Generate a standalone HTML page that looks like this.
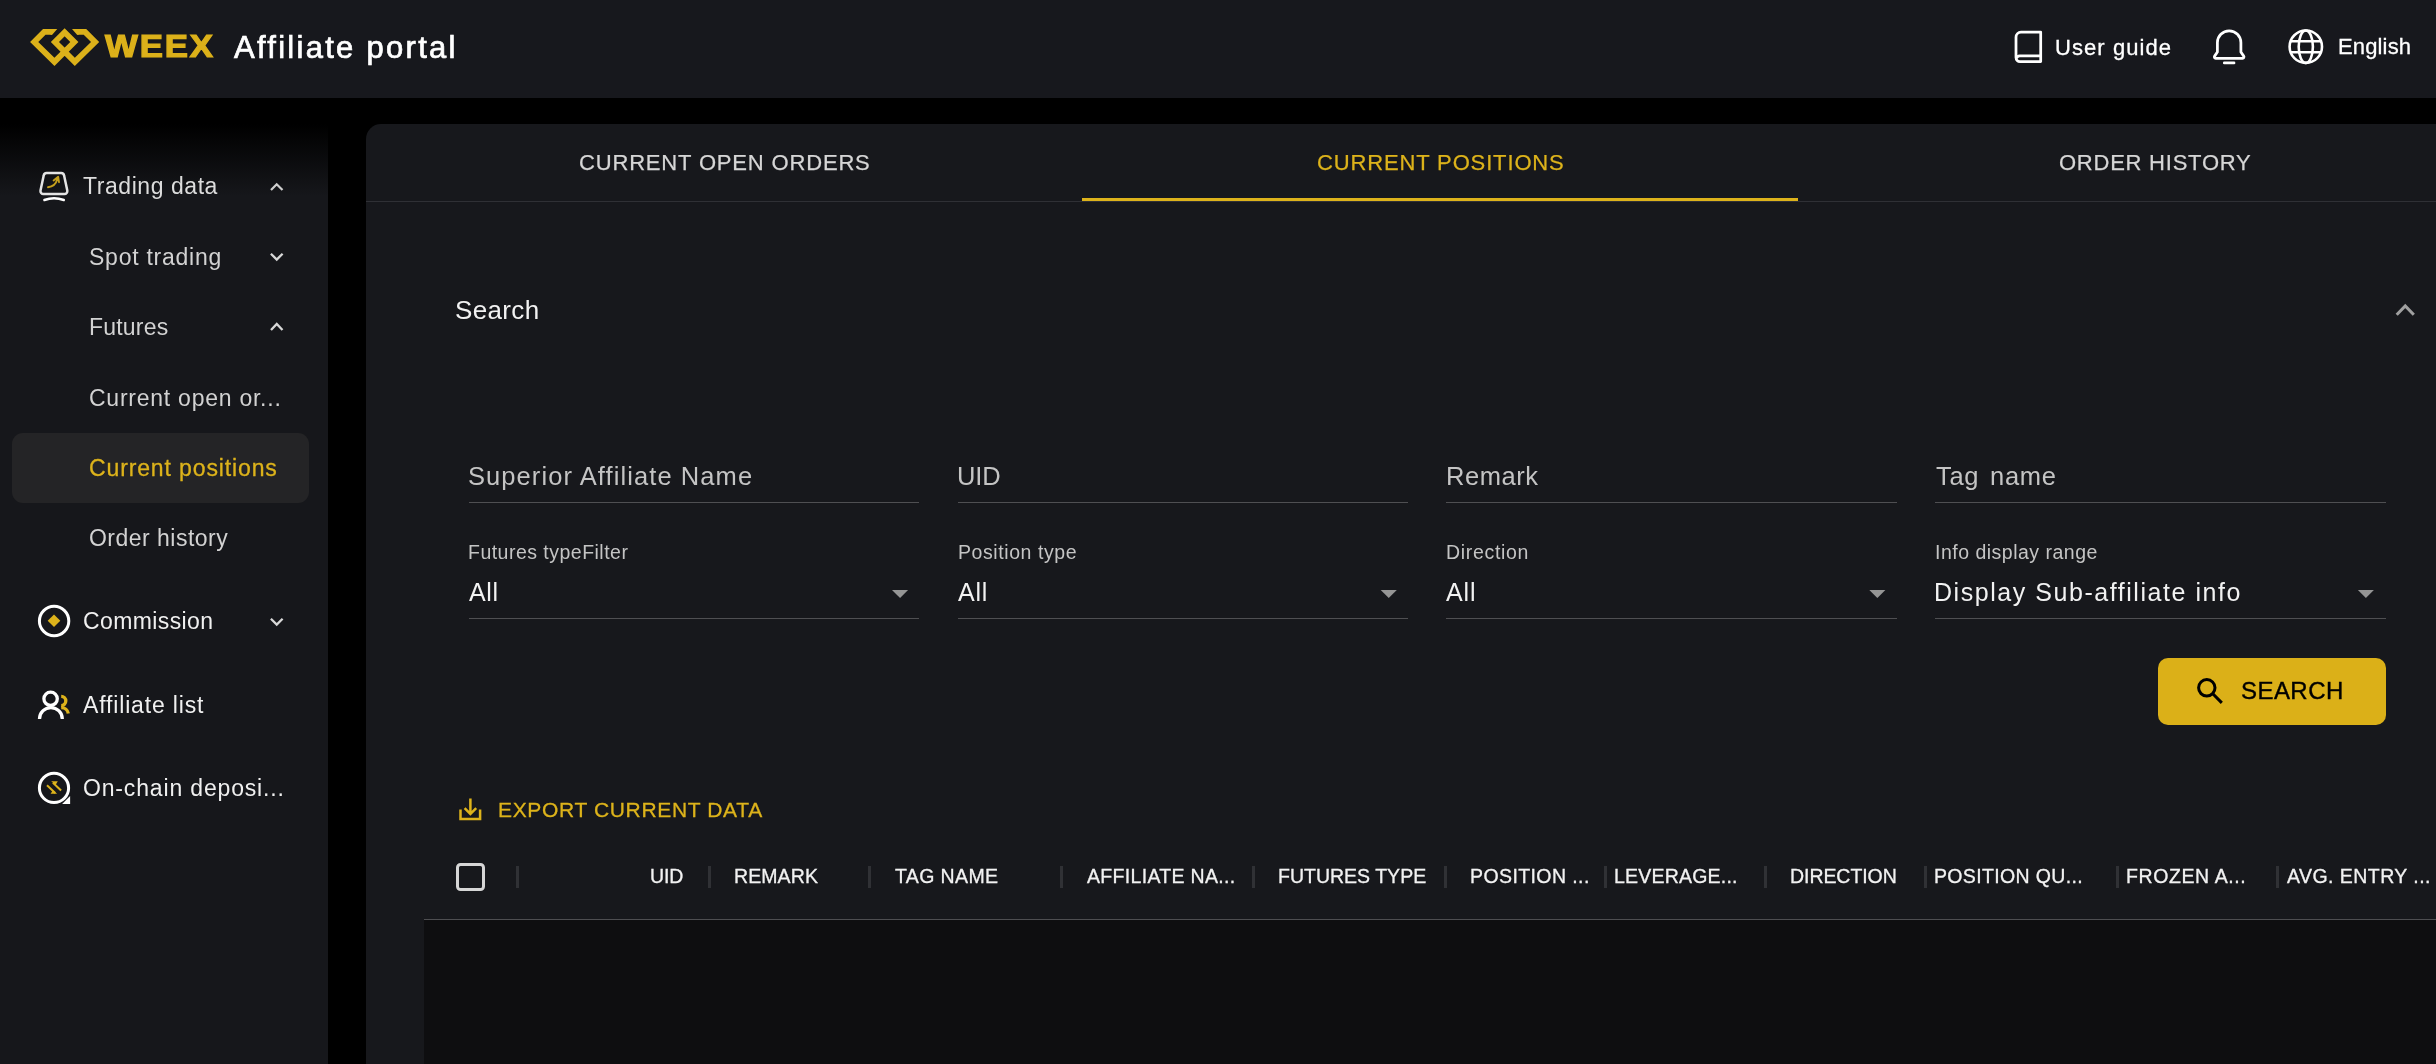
<!DOCTYPE html>
<html lang="en">
<head>
<meta charset="utf-8">
<title>WEEX Affiliate portal - Current positions</title>
<style>
*{box-sizing:border-box;margin:0;padding:0}
html,body{width:2436px;height:1064px;overflow:hidden;background:#000}
body{position:relative;font-family:"Liberation Sans",sans-serif;color:#fff}
ul{list-style:none}
a{color:inherit;text-decoration:none}
table,thead,tbody,tr,th,td{display:block;border:0}
.t{position:absolute;white-space:nowrap;line-height:1;display:block;font-weight:400;will-change:transform}
svg{position:absolute;overflow:visible}
.bg-header{position:absolute;left:0;top:0;width:2436px;height:98px;background:#17181d}
.bg-nav{position:absolute;left:0;top:124px;width:328px;height:940px;background:linear-gradient(#000 0,#16171b 72px)}
.active{position:absolute;left:12px;top:433px;width:297px;height:70px;border-radius:11px;background:#242426}
.bg-main{position:absolute;left:366px;top:124px;width:2148px;height:960px;background:#17181c;border-radius:15px 0 0 0}
.tabline{position:absolute;left:366px;top:201px;width:2148px;height:1px;background:#2f3035}
.tabsel{position:absolute;left:1082px;top:198px;width:716px;height:3px;background:#ddb31b}
.ul{position:absolute;height:1px;width:450px;background:#4f4f52}
.btn{position:absolute;left:2158px;top:658px;width:228px;height:67px;border:0;border-radius:10px;background:#dbb018;font:inherit;cursor:pointer}
.cb{position:absolute;left:456px;top:862.6px;width:28.6px;height:28.8px;border:3px solid #d6d6d6;border-radius:4.5px}
.sep{position:absolute;top:866.3px;width:3px;height:22px;background:#303135}
.tbody{position:absolute;left:424px;top:920px;width:2090px;height:200px;background:#0e0e10}
.thline{position:absolute;left:424px;top:919px;width:2090px;height:1px;background:#4e4e51}
</style>
</head>
<body>
<header>
 <div class="bg-header"></div>
 <a class="logo">
  <svg width="80" height="46" viewBox="26 24 80 46" style="left:26px;top:24px" role="img" aria-label="WEEX logo">
   <path d="M52 31.9H44.23L34.2 41.95L54.46 61.84L74.33 42L64.63 32.3L54.93 42L74.8 61.84L95.1 41.95L85.03 31.9H77.2" fill="none" stroke="#dcb11a" stroke-width="5.8" stroke-linejoin="miter" stroke-miterlimit="10"/>
   <path d="M50.5 29H57.25L52.2 34.8H50.5ZM78.7 29H72L77.05 34.8H78.7Z" fill="#dcb11a"/>
  </svg>
  <span class="t" style="left:104.60px;top:31px;font-size:30.5px;color:#dcb11a;letter-spacing:1.6px;transform:scaleX(1.1399);transform-origin:0 0;font-weight:700;-webkit-text-stroke:1.2px #dcb11a;">WEEX</span>
 </a>
 <h1 class="t" style="left:233.50px;top:32px;font-size:31px;color:#ffffff;letter-spacing:2.282px;-webkit-text-stroke:0.7px #fff;">Affiliate portal</h1>
 <div class="hdr-actions">
  <a class="guide">
   <svg width="32" height="36" viewBox="2012 28 32 36" style="left:2012px;top:28px" fill="none" stroke="#fff" stroke-width="2.75" stroke-linejoin="round">
    <path d="M2021 32.2H2040.7V61.6H2020A4 4 0 0 1 2016 57.6V37.2A5 5 0 0 1 2021 32.2Z"/>
    <path d="M2016.4 58.5A3.4 3.4 0 0 1 2019.8 55.8H2040.7"/>
   </svg>
   <span class="t" style="left:2054.80px;top:37px;font-size:22px;color:#ffffff;letter-spacing:1.072px;-webkit-text-stroke:0.3px #fff;">User guide</span>
  </a>
  <a class="bell" aria-label="Notifications">
   <svg width="36" height="38" viewBox="2211 28 36 38" style="left:2211px;top:28px" fill="none" stroke="#fff" stroke-width="2.75" stroke-linejoin="round" stroke-linecap="round">
    <path d="M2217.4 42.6A11.75 11.75 0 0 1 2240.9 42.6V52L2243.7 56.1A1.4 1.4 0 0 1 2242.6 58.3H2215.7A1.4 1.4 0 0 1 2214.6 56.1L2217.4 52Z"/>
    <path d="M2224.3 62.9H2234"/>
   </svg>
  </a>
  <a class="lang">
   <svg width="38" height="38" viewBox="2287 28 38 38" style="left:2287px;top:28px" fill="none" stroke="#fff" stroke-width="2.6">
    <circle cx="2305.8" cy="46.7" r="16.2"/>
    <ellipse cx="2305.8" cy="46.7" rx="7.1" ry="16.2"/>
    <path d="M2290.6 41.3H2321M2290.6 52.2H2321"/>
   </svg>
   <span class="t" style="left:2338.20px;top:36px;font-size:22px;color:#ffffff;letter-spacing:0.147px;-webkit-text-stroke:0.3px #fff;">English</span>
  </a>
 </div>
</header>

<nav aria-label="Sidebar">
 <div class="bg-nav"></div>
 <div class="active"></div>
 <ul>
  <li>
   <svg width="40" height="36" viewBox="36 168 40 36" style="left:36px;top:168px" fill="none" stroke-linecap="round" stroke-linejoin="round">
    <path d="M46.6 173H61.2A3 3 0 0 1 64.1 175.6L67.3 190.6A3 3 0 0 1 64.4 194.1H43.4A3 3 0 0 1 40.5 190.6L43.7 175.6A3 3 0 0 1 46.6 173Z" stroke="#e4e4e4" stroke-width="2.5"/>
    <path d="M44.4 200Q54 196.6 63.8 200" stroke="#fff" stroke-width="2.4"/>
    <path d="M48 187.2Q55.3 186.6 57.4 179M53.6 180.4L58.2 176.8L59 182.2" stroke="#c49f1c" stroke-width="1.9"/>
   </svg>
   <a class="t" style="left:83.20px;top:175px;font-size:23px;color:#dcdcdc;letter-spacing:0.555px;">Trading data</a>
   <svg width="16" height="12" viewBox="269 181 16 12" style="left:269px;top:181px" fill="none" stroke="#cfcfcf" stroke-width="2.2"><path d="M271 190L276.7 184.3L282.5 190"/></svg>
   <ul>
    <li>
     <a class="t" style="left:88.80px;top:246px;font-size:23px;color:#d2d2d2;letter-spacing:0.751px;">Spot trading</a>
     <svg width="16" height="12" viewBox="269 251 16 12" style="left:269px;top:251px" fill="none" stroke="#d8d8d8" stroke-width="2.3"><path d="M270.9 253.7L276.75 259.6L282.6 253.7"/></svg>
    </li>
    <li>
     <a class="t" style="left:89.30px;top:316px;font-size:23px;color:#d2d2d2;letter-spacing:0.204px;">Futures</a>
     <svg width="16" height="12" viewBox="269 321 16 12" style="left:269px;top:321px" fill="none" stroke="#d8d8d8" stroke-width="2.3"><path d="M271 330L276.75 324L282.5 330"/></svg>
     <ul>
      <li><a class="t" style="left:88.80px;top:387px;font-size:23px;color:#d2d2d2;letter-spacing:0.753px;">Current open or...</a></li>
      <li><a class="t" aria-current="page" style="left:88.80px;top:457px;font-size:23px;color:#ddb31b;letter-spacing:0.871px;-webkit-text-stroke:0.3px #ddb31b;">Current positions</a></li>
      <li><a class="t" style="left:88.80px;top:527px;font-size:23px;color:#d2d2d2;letter-spacing:0.481px;">Order history</a></li>
     </ul>
    </li>
   </ul>
  </li>
  <li>
   <svg width="36" height="36" viewBox="36 603 36 36" style="left:36px;top:603px"><circle cx="54.1" cy="621" r="14.7" fill="none" stroke="#fff" stroke-width="3"/><path d="M54 614.6L60.3 620.8L54 627L47.7 620.8Z" fill="#ddb31b"/></svg>
   <a class="t" style="left:82.70px;top:610px;font-size:23px;color:#f0f0f0;letter-spacing:0.397px;">Commission</a>
   <svg width="16" height="12" viewBox="269 616 16 12" style="left:269px;top:616px" fill="none" stroke="#d8d8d8" stroke-width="2.3"><path d="M270.9 618.7L276.75 624.6L282.6 618.7"/></svg>
  </li>
  <li>
   <svg width="38" height="34" viewBox="36 688 38 34" style="left:36px;top:688px" fill="none" stroke-width="3.3">
    <circle cx="50.6" cy="698.8" r="6.7" stroke="#fff"/>
    <path d="M39.5 719A11.4 11.4 0 0 1 62.3 719" stroke="#fff"/>
    <path d="M61.2 696.4A4 4 0 0 1 61.2 705.6" stroke="#ddb31b"/>
    <path d="M61.2 707.6A7 7 0 0 1 68.3 713.6" stroke="#ddb31b"/>
   </svg>
   <a class="t" style="left:83.20px;top:694px;font-size:23px;color:#f0f0f0;letter-spacing:0.845px;">Affiliate list</a>
  </li>
  <li>
   <svg width="38" height="38" viewBox="36 770 38 38" style="left:36px;top:770px">
    <path d="M62.1 804H70.1V796.1Z" fill="#fff"/>
    <circle cx="54" cy="787.9" r="14.6" fill="#16171b" stroke="#fff" stroke-width="3"/>
    <path d="M47 785.3L55.2 793" stroke="#ddb31b" stroke-width="2" fill="none"/><path d="M50.6 793.8H57.2L52.9 790.2Z" fill="#ddb31b"/>
    <path d="M61.1 790.5L52.9 782.8" stroke="#ddb31b" stroke-width="2" fill="none"/><path d="M51.2 781.3H57.8L55.5 784.9Z" fill="#ddb31b"/>
   </svg>
   <a class="t" style="left:82.70px;top:777px;font-size:23px;color:#f0f0f0;letter-spacing:0.837px;">On-chain deposi...</a>
  </li>
 </ul>
</nav>

<main>
 <div class="bg-main"></div>
 <div class="tabs" role="tablist">
  <div class="tabline"></div>
  <div class="tabsel"></div>
  <a class="t" role="tab" style="left:578.50px;top:152px;font-size:22px;color:#d6d6d6;letter-spacing:0.829px;-webkit-text-stroke:0.25px #d6d6d6;">CURRENT OPEN ORDERS</a>
  <a class="t" role="tab" aria-selected="true" style="left:1316.50px;top:152px;font-size:22px;color:#ddb31b;letter-spacing:0.857px;-webkit-text-stroke:0.25px #ddb31b;">CURRENT POSITIONS</a>
  <a class="t" role="tab" style="left:2059.00px;top:152px;font-size:22px;color:#d6d6d6;letter-spacing:0.760px;-webkit-text-stroke:0.25px #d6d6d6;">ORDER HISTORY</a>
 </div>

 <section class="search-panel">
  <h2 class="t" style="left:455.40px;top:297px;font-size:26px;color:#f2f2f2;letter-spacing:0.356px;">Search</h2>
  <svg width="24" height="16" viewBox="2394 302 24 16" style="left:2394px;top:302px" fill="none" stroke="#a0a0a0" stroke-width="3"><path d="M2396.7 314.8L2405.25 306L2413.8 314.8"/></svg>
  <form>
   <div class="field"><label class="t" style="left:468.20px;top:464px;font-size:25.5px;color:#c4c4c4;letter-spacing:1.079px;">Superior Affiliate Name</label><div class="ul" style="left:469px;top:502px"></div></div>
   <div class="field"><label class="t" style="left:957.40px;top:464px;font-size:25.5px;color:#c4c4c4;letter-spacing:-0.150px;">UID</label><div class="ul" style="left:958px;top:502px"></div></div>
   <div class="field"><label class="t" style="left:1445.60px;top:464px;font-size:25.5px;color:#c4c4c4;letter-spacing:0.558px;">Remark</label><div class="ul" style="left:1446px;top:502px;width:451px"></div></div>
   <div class="field"><label class="t" style="left:1935.80px;top:464px;font-size:25.5px;color:#c4c4c4;letter-spacing:0.714px;word-spacing:3px;">Tag name</label><div class="ul" style="left:1935px;top:502px;width:451px"></div></div>
   <div class="field select"><label class="t" style="left:468.40px;top:543px;font-size:19.5px;color:#c4c4c4;letter-spacing:0.481px;">Futures typeFilter</label><span class="t" style="left:469.10px;top:580px;font-size:25px;color:#f2f2f2;letter-spacing:0.685px;">All</span>
    <svg width="20" height="12" viewBox="890 588 20 12" style="left:890px;top:588px"><path d="M892 589.9H908.1L900.05 598Z" fill="#959595"/></svg>
    <div class="ul" style="left:469px;top:618px"></div></div>
   <div class="field select"><label class="t" style="left:957.70px;top:543px;font-size:19.5px;color:#c4c4c4;letter-spacing:0.575px;">Position type</label><span class="t" style="left:957.90px;top:580px;font-size:25px;color:#f2f2f2;letter-spacing:0.785px;">All</span>
    <svg width="20" height="12" viewBox="1379 588 20 12" style="left:1379px;top:588px"><path d="M1380.7 589.9H1396.8L1388.75 598Z" fill="#959595"/></svg>
    <div class="ul" style="left:958px;top:618px"></div></div>
   <div class="field select"><label class="t" style="left:1445.70px;top:543px;font-size:19.5px;color:#c4c4c4;letter-spacing:0.675px;">Direction</label><span class="t" style="left:1446.40px;top:580px;font-size:25px;color:#f2f2f2;letter-spacing:0.935px;">All</span>
    <svg width="20" height="12" viewBox="1868 588 20 12" style="left:1868px;top:588px"><path d="M1869.3 589.9H1885.4L1877.35 598Z" fill="#959595"/></svg>
    <div class="ul" style="left:1446px;top:618px;width:451px"></div></div>
   <div class="field select"><label class="t" style="left:1934.90px;top:543px;font-size:19.5px;color:#c4c4c4;letter-spacing:0.495px;">Info display range</label><span class="t" style="left:1934.20px;top:580px;font-size:25px;color:#f2f2f2;letter-spacing:1.547px;">Display Sub-affiliate info</span>
    <svg width="20" height="12" viewBox="2357 588 20 12" style="left:2357px;top:588px"><path d="M2357.9 589.9H2373.9L2365.90 598Z" fill="#959595"/></svg>
    <div class="ul" style="left:1935px;top:618px;width:451px"></div></div>
   <button type="button" class="btn">
    <svg width="30" height="30" viewBox="2195 676 30 30" style="left:37px;top:18px" fill="none" stroke="#000" stroke-width="3"><circle cx="2206.8" cy="687.8" r="8.2"/><path d="M2212.8 693.8L2221.8 702.9"/></svg>
    <span class="t" style="left:83.40px;top:21px;font-size:24px;color:#000000;letter-spacing:0.443px;-webkit-text-stroke:0.4px #000;">SEARCH</span>
   </button>
  </form>
 </section>

 <section class="results">
  <a class="export">
   <svg width="26" height="26" viewBox="457 796 26 26" style="left:457px;top:796px" fill="none" stroke="#ddb31b" stroke-width="2.5"><path d="M460.5 809.6V819H480.1V809.6"/><path d="M470.4 798.5V813.6M464.6 808.1L470.4 813.9L476.2 808.1"/></svg>
   <span class="t" style="left:497.70px;top:799px;font-size:21px;color:#ddb31b;letter-spacing:0.651px;-webkit-text-stroke:0.3px #ddb31b;">EXPORT CURRENT DATA</span>
  </a>
  <table>
   <thead>
    <tr>
     <th><div class="cb" role="checkbox" aria-checked="false"></div></th>
     <i class="sep" style="left:515.8px"></i><i class="sep" style="left:707.8px"></i><i class="sep" style="left:867.8px"></i><i class="sep" style="left:1059.8px"></i><i class="sep" style="left:1251.8px"></i><i class="sep" style="left:1443.8px"></i><i class="sep" style="left:1603.8px"></i><i class="sep" style="left:1763.8px"></i><i class="sep" style="left:1923.8px"></i><i class="sep" style="left:2115.8px"></i><i class="sep" style="left:2275.8px"></i>
     <th><span class="t" style="left:649.50px;top:867px;font-size:19.5px;color:#f2f2f2;letter-spacing:-0.150px;-webkit-text-stroke:0.3px #f2f2f2;">UID</span></th><th><span class="t" style="left:734.00px;top:867px;font-size:19.5px;color:#f2f2f2;letter-spacing:0.096px;-webkit-text-stroke:0.3px #f2f2f2;">REMARK</span></th><th><span class="t" style="left:895.00px;top:867px;font-size:19.5px;color:#f2f2f2;letter-spacing:0.373px;-webkit-text-stroke:0.3px #f2f2f2;">TAG NAME</span></th><th><span class="t" style="left:1086.80px;top:867px;font-size:19.5px;color:#f2f2f2;letter-spacing:0.319px;-webkit-text-stroke:0.3px #f2f2f2;">AFFILIATE NA...</span></th><th><span class="t" style="left:1278.00px;top:867px;font-size:19.5px;color:#f2f2f2;letter-spacing:0.007px;-webkit-text-stroke:0.3px #f2f2f2;">FUTURES TYPE</span></th><th><span class="t" style="left:1469.80px;top:867px;font-size:19.5px;color:#f2f2f2;letter-spacing:0.406px;-webkit-text-stroke:0.3px #f2f2f2;">POSITION ...</span></th><th><span class="t" style="left:1613.80px;top:867px;font-size:19.5px;color:#f2f2f2;letter-spacing:0.204px;-webkit-text-stroke:0.3px #f2f2f2;">LEVERAGE...</span></th><th><span class="t" style="left:1790.20px;top:867px;font-size:19.5px;color:#f2f2f2;letter-spacing:-0.058px;-webkit-text-stroke:0.3px #f2f2f2;">DIRECTION</span></th><th><span class="t" style="left:1933.80px;top:867px;font-size:19.5px;color:#f2f2f2;letter-spacing:0.348px;-webkit-text-stroke:0.3px #f2f2f2;">POSITION QU...</span></th><th><span class="t" style="left:2126.00px;top:867px;font-size:19.5px;color:#f2f2f2;letter-spacing:0.598px;-webkit-text-stroke:0.3px #f2f2f2;">FROZEN A...</span></th><th><span class="t" style="left:2287.00px;top:867px;font-size:19.5px;color:#f2f2f2;letter-spacing:0.449px;-webkit-text-stroke:0.3px #f2f2f2;">AVG. ENTRY ...</span></th>
    </tr>
   </thead>
   <tbody><tr><td><div class="thline"></div><div class="tbody"></div></td></tr></tbody>
  </table>
 </section>
</main>
</body>
</html>
